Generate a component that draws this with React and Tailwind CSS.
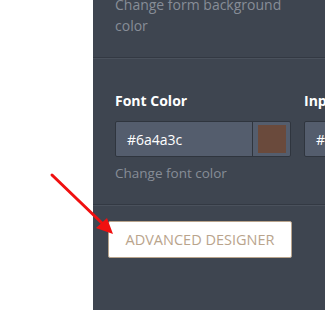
export default function App() {
  return (
    <div
      className="flex h-[310px] w-[325px] overflow-hidden bg-white"
      style={{ fontFamily: '"Open Sans", "Noto Sans", sans-serif' }}
    >
      <div className="relative w-[93px] shrink-0">
        <svg className="absolute left-0 top-0" width="130" height="260" viewBox="0 0 130 260">
          <line x1="52" y1="175" x2="104" y2="225" stroke="#f01010" strokeWidth="3" strokeLinecap="round" />
          <polygon points="113,234 96,228 107,218" fill="#f01010" />
        </svg>
      </div>
      <div className="flex-1 overflow-hidden bg-[#3e4550]">
        <div className="border-b border-[#333943] pl-[22px] pb-[21px] -mt-[6px]">
          <p className="w-[170px] text-[14px] leading-[21px] text-[#878d97]">
            Change form background color
          </p>
        </div>
        <div className="border-t border-[#4a515c] border-b-[1px] border-b-[#333943] pl-[22px] pt-[32px] pb-[22px] flex gap-[13px]">
          <div className="w-[176px] shrink-0">
            <div className="text-[14px] font-bold leading-[20px] text-white">Font Color</div>
            <div className="mt-[10px] flex h-[36px] rounded-[2px] border border-[#2f353e] bg-[#545d6d]">
              <div className="flex flex-1 items-center pl-[11px] text-[14px] text-white">#6a4a3c</div>
              <div className="flex w-[38px] items-center justify-center border-l border-[#2f353e]">
                <div className="h-[28px] w-[28px] bg-[#6a4a3c]" />
              </div>
            </div>
            <div className="mt-[7px] text-[13.5px] leading-[18px] text-[#878d97]">Change font color</div>
          </div>
          <div className="w-[150px] shrink-0">
            <div className="whitespace-nowrap text-[14px] font-bold leading-[20px] text-white">Input Background</div>
            <div className="mt-[10px] flex h-[36px] rounded-[2px] border border-[#2f353e] bg-[#545d6d]">
              <div className="flex flex-1 items-center pl-[11px] text-[14px] text-white">#ffffff</div>
            </div>
          </div>
        </div>
        <div className="border-t border-[#4a515c] pl-[15px] pt-[15px]">
          <button className="h-[37px] w-[184px] rounded-[2px] border border-[#b9a48c] bg-white text-[14.5px] text-[#b9a48c]">
            ADVANCED DESIGNER
          </button>
        </div>
      </div>
    </div>
  );
}
